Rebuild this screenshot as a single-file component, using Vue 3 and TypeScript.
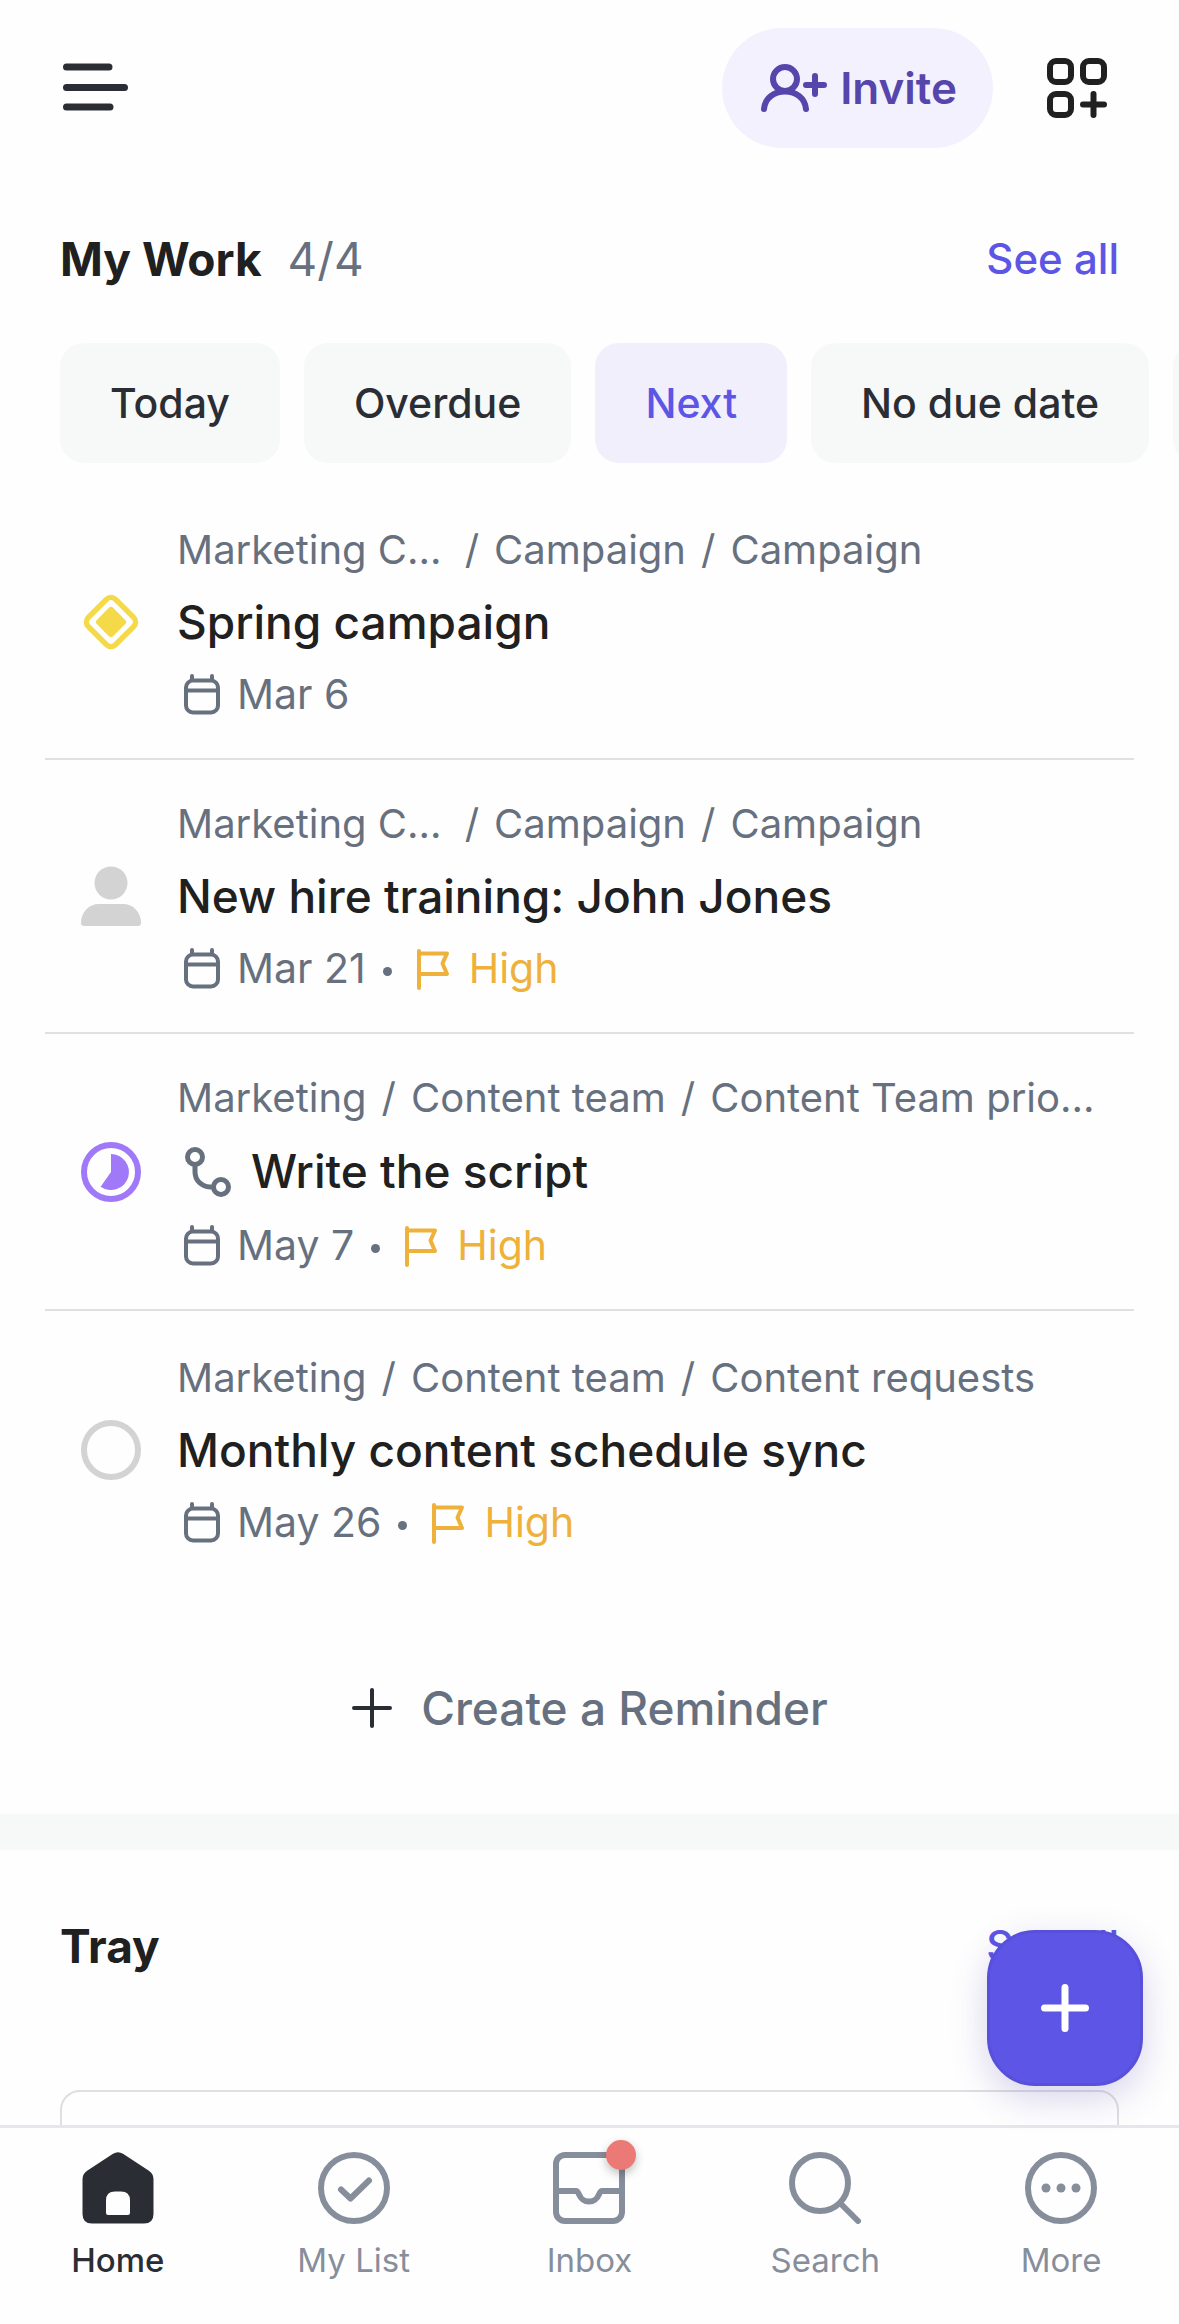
<script setup lang="ts">
import { ref } from 'vue'

type Status = 'milestone' | 'person' | 'progress' | 'open'

interface Crumb {
  text: string
  clipped?: boolean
}

interface Task {
  id: number
  status: Status
  crumbs: Crumb[]
  title: string
  subtask?: boolean
  due: string
  priority?: string
}

const filters = ['Today', 'Overdue', 'Next', 'No due date']
const activeFilter = ref('Next')

const tasks: Task[] = [
  {
    id: 1,
    status: 'milestone',
    crumbs: [{ text: 'Marketing C...', clipped: true }, { text: 'Campaign' }, { text: 'Campaign' }],
    title: 'Spring campaign',
    due: 'Mar 6',
  },
  {
    id: 2,
    status: 'person',
    crumbs: [{ text: 'Marketing C...', clipped: true }, { text: 'Campaign' }, { text: 'Campaign' }],
    title: 'New hire training: John Jones',
    due: 'Mar 21',
    priority: 'High',
  },
  {
    id: 3,
    status: 'progress',
    crumbs: [{ text: 'Marketing' }, { text: 'Content team' }, { text: 'Content Team prio...' }],
    title: 'Write the script',
    subtask: true,
    due: 'May 7',
    priority: 'High',
  },
  {
    id: 4,
    status: 'open',
    crumbs: [{ text: 'Marketing' }, { text: 'Content team' }, { text: 'Content requests' }],
    title: 'Monthly content schedule sync',
    due: 'May 26',
    priority: 'High',
  },
]

const tabs = ['Home', 'My List', 'Inbox', 'Search', 'More']
const activeTab = ref('Home')
</script>

<template>
  <div class="app">
    <div class="screen">
      <main class="content">
        <header class="topbar">
          <button class="icon-button" type="button" aria-label="Menu">
            <svg class="line menu-icon" width="72" height="60" viewBox="0 0 72 60">
              <path d="M6.5 9H49M6.5 29.5H64.5M6.5 49H50" />
            </svg>
          </button>
          <div class="topbar-actions">
            <button class="invite" type="button">
              <svg class="line" width="72" height="54" viewBox="0 0 72 54" aria-hidden="true">
                <circle cx="27" cy="18" r="12" />
                <path d="M6 48C7 37 16 30.500 27 30.500S47 37 48 48M48 24H66M57 15V33" />
              </svg>
              Invite
            </button>
            <button class="icon-button" type="button" aria-label="Customize">
              <svg class="line grid-icon" width="84" height="60" viewBox="-12 0 84 60">
                <rect x="3" y="3" width="21" height="21" rx="6" />
                <rect x="36" y="3" width="21" height="21" rx="6" />
                <rect x="3" y="36" width="21" height="21" rx="6" />
                <path d="M36 46.500H57M46.500 36V57" />
              </svg>
            </button>
          </div>
        </header>

        <section>
          <div class="section-head work-head">
            <h2>My Work <span class="count">4/4</span></h2>
            <a class="see-all" href="#my-work">See all</a>
          </div>

          <div class="chips">
            <button
              v-for="name in filters"
              :key="name"
              type="button"
              class="chip"
              :class="{ active: name === activeFilter }"
              @click="activeFilter = name"
            >
              {{ name }}
            </button>
            <span class="chip" aria-hidden="true"></span>
          </div>

          <ul class="tasks">
            <li v-for="task in tasks" :key="task.id" class="task">
              <p class="crumbs">
                <template v-for="(crumb, i) in task.crumbs" :key="i">
                  <span v-if="i > 0" class="slash">/</span>
                  <span :class="{ clipped: crumb.clipped }">{{ crumb.text }}</span>
                </template>
              </p>

              <svg class="status" width="60" height="60" viewBox="0 0 60 60" aria-hidden="true">
                <g v-if="task.status === 'milestone'" transform="rotate(45 30 30)">
                  <rect x="10.750" y="10.750" width="38.500" height="38.500" rx="6.500" fill="none" stroke="#f4da48" stroke-width="5.500" />
                  <rect x="18.500" y="18.500" width="23" height="23" rx="3" fill="#f4da48" />
                </g>
                <g v-else-if="task.status === 'person'" fill="#d3d3d3">
                  <circle cx="30" cy="17" r="16.500" />
                  <path d="M0 57C0 46 8 38 18 38H42C52 38 60 46 60 57Q60 60 57 60H3Q0 60 0 57Z" />
                </g>
                <g v-else-if="task.status === 'progress'">
                  <circle cx="30" cy="30" r="27" fill="none" stroke="#a079f9" stroke-width="6" />
                  <path d="M30 30V12A18 18 0 1 1 19.600 44.700Z" fill="#a079f9" />
                </g>
                <circle v-else cx="30" cy="30" r="27" fill="none" stroke="#d3d3d3" stroke-width="6" />
              </svg>

              <h3 class="title" :class="{ 'with-icon': task.subtask }">
                <svg v-if="task.subtask" class="subtask" width="60" height="60" viewBox="0 0 60 60" aria-label="Subtask">
                  <circle cx="18" cy="15" r="7.500" />
                  <circle cx="44" cy="45" r="7.500" />
                  <path d="M18 23V30A15 15 0 0 0 33 45H36" />
                </svg>
                {{ task.title }}
              </h3>

              <p class="meta">
                <svg class="calendar" width="48" height="48" viewBox="0 0 48 48" aria-hidden="true">
                  <rect x="9" y="10.500" width="32" height="32" rx="7" />
                  <path d="M9 20.500H41M15 6V10M35 6V10" />
                </svg>
                <span class="due">{{ task.due }}</span>
                <template v-if="task.priority">
                  <span class="dot"></span>
                  <svg class="flag" width="40" height="48" viewBox="0 0 40 48" aria-hidden="true">
                    <path d="M5 7V44M5 9.500H33L28.500 19.500L33 30H5" />
                  </svg>
                  <span class="priority">{{ task.priority }}</span>
                </template>
              </p>
            </li>
          </ul>

          <button class="reminder" type="button">
            <svg width="42" height="42" viewBox="0 0 42 42" aria-hidden="true">
              <path d="M3 21H39M21 3V39" />
            </svg>
            Create a Reminder
          </button>
        </section>

        <section class="tray">
          <div class="section-head">
            <h2>Tray</h2>
            <a class="see-all" href="#tray">See all</a>
          </div>
          <div class="tray-card"></div>
        </section>
      </main>

      <button class="fab" type="button" aria-label="Create">
        <svg class="line" width="48" height="48" viewBox="0 0 48 48">
          <path d="M3.500 24H44.500M24 3.500V44.500" />
        </svg>
      </button>
    </div>

    <nav class="tabs">
      <button
        v-for="tab in tabs"
        :key="tab"
        type="button"
        class="tab"
        :class="{ current: tab === activeTab }"
        @click="activeTab = tab"
      >
        <span class="tab-icon">
          <svg class="line" width="72" height="72" viewBox="0 0 72 72" aria-hidden="true">
            <path
              v-if="tab === 'Home'"
              class="solid"
              d="M31 1.800Q36 -1.500 41 1.800L66.500 18.500Q71.500 21.500 71.500 27V62Q71.500 71.500 62 71.500H10Q.5 71.500 .5 62V27Q.5 21.500 5.500 18.500ZM33 39.500Q24 39.500 24 48.500V61Q24 63 26 63H46Q48 63 48 61V48.500Q48 39.500 39 39.500Z"
            />
            <template v-else-if="tab === 'My List'">
              <circle cx="36" cy="36" r="33" />
              <path d="M23 37.500L32.500 46.500L51 28.500" />
            </template>
            <template v-else-if="tab === 'Inbox'">
              <rect x="3" y="3" width="66" height="66" rx="9" />
              <path d="M3 39H23C27 39 25 49.500 36 49.500S45 39 49 39H69" />
            </template>
            <template v-else-if="tab === 'Search'">
              <circle cx="31" cy="31" r="28" />
              <path d="M52 52L69 69" />
            </template>
            <template v-else>
              <circle cx="36" cy="36" r="33" />
              <g class="solid">
                <circle cx="21" cy="36" r="4.500" />
                <circle cx="36" cy="36" r="4.500" />
                <circle cx="51" cy="36" r="4.500" />
              </g>
            </template>
          </svg>
          <span v-if="tab === 'Inbox'" class="badge"></span>
        </span>
        {{ tab }}
      </button>
    </nav>
  </div>
</template>

<style>
body {
  margin: 0;
  background: #fefefe;
}
</style>

<style scoped>
.app {
  display: flex;
  flex-direction: column;
  height: 100vh;
  overflow: hidden;
  background: #fefefe;
  color: #202020;
  font-family: Inter, "Liberation Sans", sans-serif;
}

button {
  margin: 0;
  padding: 0;
  border: 0;
  background: none;
  color: inherit;
  font: inherit;
}

h2,
h3,
p,
ul {
  margin: 0;
  padding: 0;
}

svg {
  display: block;
  flex: none;
}

.line {
  fill: none;
  stroke: currentColor;
  stroke-width: 6;
  stroke-linecap: round;
  stroke-linejoin: round;
}

.solid {
  fill: currentColor;
  fill-rule: evenodd;
  stroke: none;
}

.screen {
  position: relative;
  z-index: 1;
  flex: 1;
  min-height: 0;
}

.content {
  height: 100%;
  overflow: hidden;
}

.topbar {
  display: flex;
  align-items: center;
  justify-content: space-between;
  padding: 28px 60px 0;
}

.menu-icon {
  color: #2a2e34;
  stroke-width: 7;
}

.topbar-actions {
  display: flex;
  align-items: center;
  gap: 42px;
}

.invite {
  display: flex;
  align-items: center;
  gap: 10px;
  height: 120px;
  padding: 0 36px;
  border-radius: 60px;
  background: #f4f1fe;
  color: #5646ab;
  font-size: 44px;
  font-weight: 600;
}

.section-head {
  display: flex;
  align-items: center;
  justify-content: space-between;
  padding: 0 60px;
  line-height: 60px;
}

.work-head {
  padding-top: 81px;
}

h2 {
  font-size: 46px;
  font-weight: 700;
}

.count {
  margin-left: 15px;
  color: #67707e;
  font-weight: 400;
}

.see-all {
  color: #5c55e6;
  font-size: 42px;
  font-weight: 500;
  text-decoration: none;
}

.chips {
  display: flex;
  gap: 24px;
  margin-top: 54px;
  padding-left: 60px;
  overflow: hidden;
}

.chip {
  flex: none;
  height: 120px;
  padding: 0 50px;
  border-radius: 24px;
  background: #f7f8f8;
  color: #2a2e34;
  font-size: 41px;
  font-weight: 500;
}

.chip.active {
  background: #f1effc;
  color: #5c55e6;
}

.tasks {
  margin: 23px 45px 0;
  list-style: none;
}

.task {
  display: grid;
  grid-template-columns: 60px 1fr;
  column-gap: 36px;
  align-items: center;
  padding: 28px 0 28px 36px;
  border-bottom: 2px solid #e0e0e4;
  line-height: 72px;
}

.task:last-child {
  padding-top: 31px;
  border-bottom: 0;
}

.crumbs,
.meta {
  display: flex;
  grid-column: 2;
  color: #67707e;
  white-space: nowrap;
}

.crumbs {
  font-size: 40px;
}

.clipped {
  padding-right: 8px;
}

.slash {
  margin: 0 15px;
}

.title {
  display: flex;
  align-items: center;
  font-size: 46px;
  font-weight: 500;
  white-space: nowrap;
}

.with-icon {
  gap: 14px;
  line-height: 75px;
}

.subtask,
.calendar,
.flag {
  fill: none;
  stroke: #67707e;
  stroke-width: 5;
  stroke-linecap: round;
  stroke-linejoin: round;
}

.calendar,
.flag {
  stroke-width: 4;
}

.flag {
  stroke: #edb13c;
}

.meta {
  align-items: center;
  font-size: 41px;
}

.due {
  margin-left: 12px;
}

.dot {
  width: 9px;
  height: 9px;
  margin: 6px 22px 0 17px;
  border-radius: 50%;
  background: #67707e;
}

.priority {
  margin-left: 15px;
  color: #edb13c;
}

.reminder {
  display: flex;
  align-items: center;
  justify-content: center;
  gap: 28px;
  width: 100%;
  height: 212px;
  margin-top: 16px;
  color: #67707e;
  font-size: 46px;
  font-weight: 500;
}

.reminder path {
  fill: none;
  stroke: #2a2e34;
  stroke-width: 4;
  stroke-linecap: round;
}

.tray {
  padding-top: 66px;
  border-top: 36px solid #f7f8f8;
}

.tray-card {
  height: 240px;
  margin: 114px 60px 0;
  border: 2px solid #dedee3;
  border-radius: 20px;
}

.fab {
  position: absolute;
  right: 36px;
  bottom: 39px;
  display: flex;
  align-items: center;
  justify-content: center;
  width: 156px;
  height: 156px;
  border: 3px solid #5850da;
  border-radius: 48px;
  background: #5d55e5;
  color: #ffffff;
  box-shadow: 0 12px 36px rgba(86, 76, 170, 0.24);
}

.fab svg {
  stroke-width: 7;
}

.tabs {
  display: flex;
  padding: 24px 0 44px;
  border-top: 3px solid #e6e7ec;
  background: #fefefe;
}

.tab {
  display: flex;
  flex: 1 1 0;
  flex-direction: column;
  align-items: center;
  gap: 16px;
  color: #878e9b;
  font-size: 33px;
  line-height: 40px;
}

.tab.current {
  color: #2a2e34;
  font-weight: 500;
}

.tab-icon {
  position: relative;
}

.badge {
  position: absolute;
  top: -12px;
  right: -11px;
  width: 30px;
  height: 30px;
  border-radius: 50%;
  background: #eb7975;
  box-shadow: 0 4px 10px rgba(0, 0, 0, 0.25);
}
</style>
